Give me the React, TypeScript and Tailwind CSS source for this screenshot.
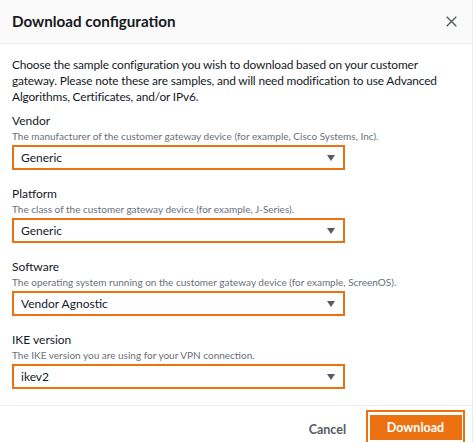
import React from "react";

type Field = {
  label: string;
  hint: string;
  value: string;
};

const fields: Field[] = [
  {
    label: "Vendor",
    hint: "The manufacturer of the customer gateway device (for example, Cisco Systems, Inc).",
    value: "Generic",
  },
  {
    label: "Platform",
    hint: "The class of the customer gateway device (for example, J-Series).",
    value: "Generic",
  },
  {
    label: "Software",
    hint: "The operating system running on the customer gateway device (for example, ScreenOS).",
    value: "Vendor Agnostic",
  },
  {
    label: "IKE version",
    hint: "The IKE version you are using for your VPN connection.",
    value: "ikev2",
  },
];

const SelectField: React.FC<{ field: Field }> = ({ field }) => (
  <div className="flex flex-col">
    <label className="text-[12px] leading-[16px] text-[#16191f]">{field.label}</label>
    <span className="text-[10px] leading-[14px] text-[#687078] whitespace-nowrap">
      {field.hint}
    </span>
    <div className="mt-[2px] w-[333px] h-[25px] border-2 border-[#ec7211] bg-white flex items-center justify-between pl-[7px] pr-[8px]">
      <span className="text-[12px] text-[#16191f]">{field.value}</span>
      <svg width="8" height="6" viewBox="0 0 8 6">
        <path d="M0 0 H8 L4 6 Z" fill="#545b64" />
      </svg>
    </div>
  </div>
);

export default function App() {
  return (
    <div
      className="w-[473px] h-[442px] bg-white overflow-hidden flex flex-col border-r border-[#eaeded]"
      style={{ fontFamily: "Lato, 'Noto Sans', sans-serif" }}
    >
      <div className="h-[44px] shrink-0 bg-[#fafafa] border-b border-[#eaeded] flex items-center justify-between pl-[12px] pr-[15px]">
        <h2 className="text-[15.2px] font-bold text-[#16191f]">Download configuration</h2>
        <svg width="11" height="11" viewBox="0 0 11 11">
          <path d="M0.7 0.7 L10.3 10.3 M10.3 0.7 L0.7 10.3" stroke="#545b64" strokeWidth="1.4" />
        </svg>
      </div>
      <div className="flex flex-col px-[12px] pt-[13px] h-[362px] shrink-0 border-b border-[#eaeded]">
        <p className="text-[11.9px] leading-[16px] tracking-[-0.15px] text-[#16191f] pr-[17px]">
          Choose the sample configuration you wish to download based on your customer
          gateway. Please note these are samples, and will need modification to use Advanced
          Algorithms, Certificates, and/or IPv6.
        </p>
        <div className="flex flex-col gap-[16px] mt-[8px]">
          {fields.map((f) => (
            <SelectField key={f.label} field={f} />
          ))}
        </div>
      </div>
      <div className="flex items-start justify-end gap-[20px] pr-[7px] pt-[4px]">
        <button className="mt-[11px] text-[12.5px] font-bold text-[#545b64]">Cancel</button>
        <div className="border-2 border-[#ec7211] p-[1.5px]">
          <button className="w-[92px] h-[25px] bg-[#ec7211] text-white text-[12.5px] font-bold">
            Download
          </button>
        </div>
      </div>
    </div>
  );
}
